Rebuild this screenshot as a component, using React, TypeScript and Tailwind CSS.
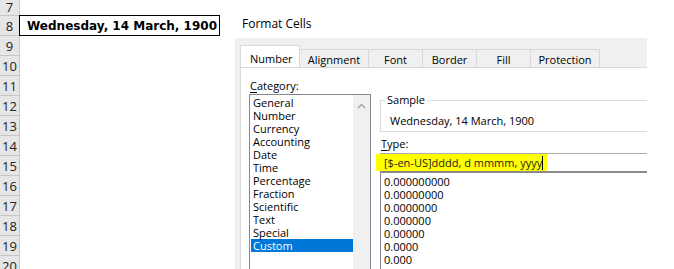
import React from "react";

const rows = [8, 9, 10, 11, 12, 13, 14, 15, 16, 17, 18, 19, 20];

const categories = [
  "General",
  "Number",
  "Currency",
  "Accounting",
  "Date",
  "Time",
  "Percentage",
  "Fraction",
  "Scientific",
  "Text",
  "Special",
  "Custom",
];

const types = [
  "0.000000000",
  "0.00000000",
  "0.0000000",
  "0.000000",
  "0.00000",
  "0.0000",
  "0.000",
  "0.0",
];

const tabs = [
  { label: "Number", w: "w-[60px]", active: true },
  { label: "Alignment", w: "w-[70px]" },
  { label: "Font", w: "w-[55px]" },
  { label: "Border", w: "w-[55px]" },
  { label: "Fill", w: "w-[55px]" },
  { label: "Protection", w: "w-[70px]" },
];

const ui = "font-['Segoe_UI','Open_Sans','Noto_Sans',sans-serif]";
const hdr = `w-[20px] shrink-0 bg-[#e6e6e6] border-r border-b border-[#c6c6c6] text-[13px] text-center text-[#222] ${ui}`;

function Sheet() {
  return (
    <div className="w-[235px] shrink-0 flex flex-col overflow-hidden">
      {/* row 7, cut at the top */}
      <div className="flex h-[16px] shrink-0">
        <div className={`${hdr} leading-[14px]`}>7</div>
      </div>
      {rows.map((r) => (
        <div key={r} className="flex h-[20px] shrink-0">
          <div className={`${hdr} leading-[20px]`}>{r}</div>
          {r === 8 && (
            <div className="-mt-px h-[21px] w-[201px] -ml-px border border-black flex items-center justify-end pr-[2px] font-['DejaVu_Sans',sans-serif] font-bold text-[12px] text-black">
              Wednesday, 14 March, 1900
            </div>
          )}
        </div>
      ))}
    </div>
  );
}

function CategoryList() {
  return (
    <div className="flex w-[122px] flex-1 mt-px border border-[#828790] border-b-0">
      <div className="flex-1 pl-px pt-px">
        {categories.map((c) => (
          <div
            key={c}
            className={`h-[13px] leading-[13px] pl-[2px] text-[11px] ${
              c === "Custom" ? "bg-[#0078d7] text-white" : "text-black"
            }`}
          >
            {c}
          </div>
        ))}
      </div>
      <div className="w-[17px] bg-[#f0f0f0] flex justify-center pt-[8px]">
        <svg width="9" height="6" viewBox="0 0 9 6">
          <path d="M1 5 L4.5 1.5 L8 5" fill="none" stroke="#a3a3a3" strokeWidth="1.3" />
        </svg>
      </div>
    </div>
  );
}

function FormatDialog() {
  return (
    <div className={`w-[412px] shrink-0 flex flex-col h-[269px] overflow-hidden ${ui}`}>
      <div className="h-[38px] shrink-0 pl-[7px] pt-[16px] text-[12px] leading-[16px] text-black">
        Format Cells
      </div>
      <div className="flex-1 min-h-0 bg-[#f0f0f0] pl-[5px] flex flex-col">
        {/* tab strip */}
        <div className="h-[29px] shrink-0 flex items-end">
          {tabs.map((t) =>
            t.active ? (
              <div
                key={t.label}
                className={`${t.w} h-[23px] -mb-px bg-white border border-b-0 border-[#d9d9d9] pl-[9px] pt-[5px] text-[11px] leading-[16px] text-black`}
              >
                {t.label}
              </div>
            ) : (
              <div
                key={t.label}
                className={`${t.w} h-[18px] -ml-px border border-b-0 border-[#d9d9d9] text-center text-[11px] leading-[19px] text-black`}
              >
                {t.label}
              </div>
            ),
          )}
        </div>
        {/* tab page */}
        <div className="flex-1 min-h-0 bg-white border-l border-t border-[#d9d9d9] flex pl-[8px] overflow-hidden">
          <div className="w-[122px] shrink-0 pt-[10px] flex flex-col">
            <div className="pl-px text-[11px] leading-[15px] text-black">
              <span className="underline underline-offset-2">C</span>ategory:
            </div>
            <CategoryList />
          </div>
          <div className="flex-1 pl-[9px] pt-[32px] min-w-0 flex flex-col">
            <div className="relative h-[32px] shrink-0 border border-r-0 border-[#dcdcdc]">
              <span className="absolute left-[4px] -top-[9px] bg-white px-[2px] text-[11px] leading-[16px] text-black">
                Sample
              </span>
              <div className="pt-[12px] pl-[9px] text-[11px] leading-[15px] text-black">
                Wednesday, 14 March, 1900
              </div>
            </div>
            <div className="mt-[4px] pl-px text-[11px] leading-[15px] text-black">
              <span className="underline underline-offset-2">T</span>ype:
            </div>
            <div className="relative shrink-0 mt-[2px] h-[20px] border-t border-b-2 border-t-[#acacac] border-b-[#8a8a8a]">
              <div className="absolute -left-[4px] top-0 w-[171px] h-[17px] bg-[#ffff00]" />
              <div className="relative pl-[4px] text-[11px] leading-[17px] text-[#1c1c1c] flex items-center">
                [$-en-US]dddd, d mmmm, yyyy
                <span className="inline-block w-px h-[14px] bg-black" />
              </div>
            </div>
            <div className="border-l border-[#828790] flex-1 pt-[2px] pl-[3px]">
              {types.map((t) => (
                <div key={t} className="h-[13px] leading-[13px] text-[11px] text-black">
                  {t}
                </div>
              ))}
            </div>
          </div>
        </div>
      </div>
    </div>
  );
}

export default function App() {
  return (
    <div className="w-[674px] h-[269px] bg-white flex overflow-hidden">
      <Sheet />
      <FormatDialog />
    </div>
  );
}
